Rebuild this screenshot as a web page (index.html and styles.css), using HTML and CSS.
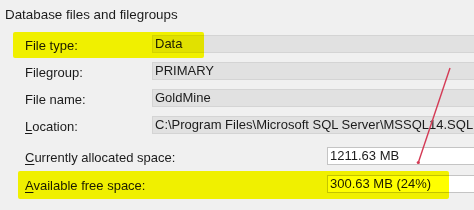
FILE: index.html
```html
<!DOCTYPE html>
<html>
<head>
<meta charset="utf-8">
<link rel="stylesheet" href="styles.css">
</head>
<body>
<div class="panel">
  <div class="title">Database files and filegroups</div>
  <div class="form">
    <div class="row">
      <span class="label">File type:</span>
      <span class="field ro">Data</span>
    </div>
    <div class="row">
      <span class="label">Filegroup:</span>
      <span class="field ro">PRIMARY</span>
    </div>
    <div class="row">
      <span class="label">File name:</span>
      <span class="field ro">GoldMine</span>
    </div>
    <div class="row">
      <span class="label"><u>L</u>ocation:</span>
      <span class="field ro">C:\Program Files\Microsoft SQL Server\MSSQL14.SQLEXPRESS\MSSQL\DATA</span>
    </div>
    <div class="row wide first-wide">
      <span class="label"><u>C</u>urrently allocated space:</span>
      <span class="field val">1211.63 MB</span>
    </div>
    <div class="row wide">
      <span class="label"><u>A</u>vailable free space:</span>
      <span class="field val">300.63 MB (24%)</span>
    </div>
  </div>
  <div class="hl hl-type"></div>
  <div class="hl hl-free"></div>
  <svg class="arrow" width="474" height="210" viewBox="0 0 474 210">
    <line x1="450" y1="68" x2="418.5" y2="162" stroke="#d43a55" stroke-width="1.4"/>
    <circle cx="418.3" cy="162.5" r="1.6" fill="#d43a55"/>
  </svg>
</div>
</body>
</html>
```

FILE: styles.css
```css
html, body {
  margin: 0;
  padding: 0;
  width: 474px;
  height: 210px;
  overflow: hidden;
  background: #f0f0f0;
}

.panel {
  position: relative;
  width: 474px;
  height: 210px;
  font-family: "Liberation Sans", Arial, sans-serif;
  color: #1b1b1b;
}

.title {
  padding: 6px 0 0 5px;
  height: 35px;
  box-sizing: border-box;
  font-size: 13.4px;
  line-height: 18px;
}

.form {
  display: flex;
  flex-direction: column;
  gap: 9px;
  padding-left: 25px;
}

.row {
  display: grid;
  grid-template-columns: 127px 330px;
  height: 18px;
  font-size: 13px;
}

.row.wide {
  grid-template-columns: 302px 160px;
}

.row.first-wide {
  margin-top: 4px;
  margin-bottom: 1px;
}

.label {
  line-height: 18px;
  padding-top: 2px;
  white-space: nowrap;
}

.label u {
  text-decoration-thickness: 1px;
  text-underline-offset: 2px;
}

.field {
  box-sizing: border-box;
  height: 18px;
  line-height: 16px;
  padding-left: 2px;
  white-space: nowrap;
  overflow: hidden;
  border: 1px solid #d2d2d2;
}

.field.ro {
  background: #e1e1e1;
  border-color: #d4d4d4;
}

.field.val {
  background: #ffffff;
  border-color: #c4c4c4;
}

.hl {
  position: absolute;
  background: #ffff00;
  mix-blend-mode: multiply;
  border-radius: 2px;
}

.hl-type {
  left: 13px;
  top: 32px;
  width: 191px;
  height: 26px;
}

.hl-free {
  left: 18px;
  top: 171px;
  width: 431px;
  height: 28px;
}

.arrow {
  position: absolute;
  left: 0;
  top: 0;
  pointer-events: none;
}
```
